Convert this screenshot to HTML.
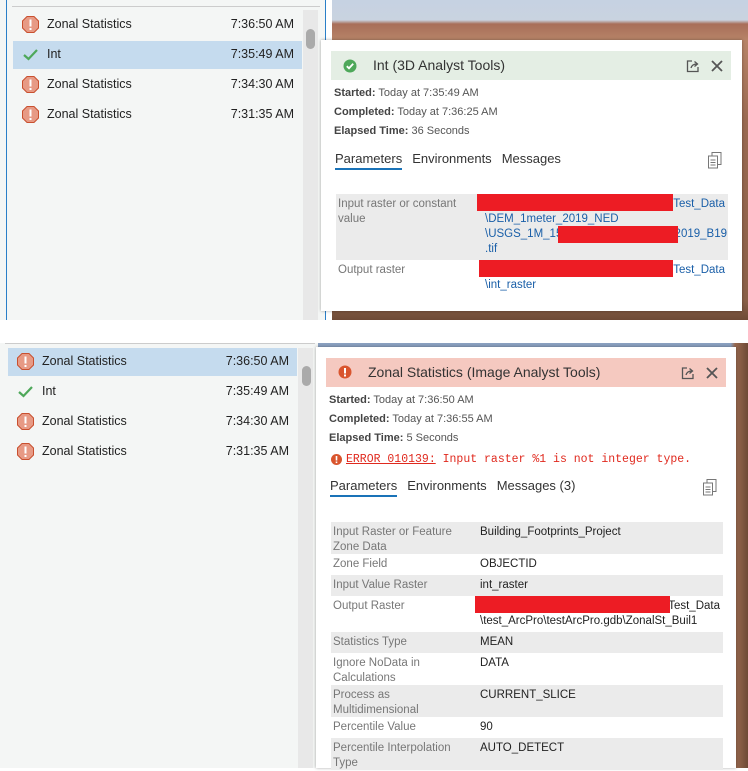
<!DOCTYPE html>
<html><head><style>
*{margin:0;padding:0;box-sizing:border-box}
body{width:748px;height:768px;position:relative;overflow:hidden;background:#fff;font-family:"Liberation Sans",sans-serif;font-size:12px;color:#222}
.abs{position:absolute}
.panel{background:#f4f6f5}
.row{position:absolute;height:29px;line-height:29px;font-size:12.5px;color:#222}
.row .t{position:absolute;right:8px}
.row .n{position:absolute;left:34px}
.ic{position:absolute;left:9px;top:6px;width:17px;height:17px}
.pop{background:#fff;box-shadow:0 0 3px rgba(0,0,0,.35)}
.hdr{position:absolute;height:29px;font-size:14px;line-height:29px;color:#333}
.meta{position:absolute;font-size:11px;color:#555;line-height:19px}
.meta b{color:#444}
.tabs{position:absolute;font-size:13px;color:#333}
.tabs span{margin-right:10px}
.tabs .a{border-bottom:2px solid #1a73b8;padding-bottom:2px}
.tbl{position:absolute;font-size:11.5px;line-height:15px}
.tr{position:relative;padding:3px 0}
.tr.g{background:#ebebeb}
.k{color:#777;width:136px;display:inline-block;vertical-align:top;padding-left:2px}
.v{position:absolute;left:149px;top:3px;color:#222;white-space:nowrap}
.red{background:#ed1c24;position:absolute}
.link{color:#1a5fa8}
</style></head><body>
<!-- TOP -->
<div class="abs" style="left:332px;top:0;width:416px;height:320px;background:linear-gradient(#c6d2e2 0,#c9d3e0 20px,#a86e58 24px,#b78468 40px,#9a6a52 120px,#8a6048 300px,#6e4a36 320px)"></div>
<div class="abs panel" style="left:0;top:0;width:326px;height:320px"></div>
<div class="abs" style="left:6px;top:0;width:1px;height:320px;background:#2a7fc8"></div>
<div class="abs" style="left:325px;top:0;width:1px;height:320px;background:#2a7fc8"></div>
<div class="abs" style="left:12px;top:6px;width:308px;height:1px;background:#ccc"></div>
<div class="abs" style="left:303px;top:10px;width:15px;height:310px;background:#e8e8e8"></div>
<div class="abs" style="left:306px;top:29px;width:9px;height:20px;border-radius:5px;background:#aaa"></div>
<div class="abs" style="left:13px;top:41px;width:289px;height:28px;background:#c5dbee"></div>

<svg width="0" height="0" style="position:absolute"><defs>
<g id="err"><polygon points="5,0.5 12,0.5 16.5,5 16.5,12 12,16.5 5,16.5 0.5,12 0.5,5" fill="#e79a85" stroke="#c9502f" stroke-width="1"/><rect x="7.5" y="3.5" width="2" height="7" fill="#fff"/><rect x="7.5" y="12" width="2" height="2" fill="#fff"/></g>
<g id="ok"><path d="M2 9 L6.5 13 L15 4" stroke="#4ea85a" stroke-width="2.2" fill="none"/></g>
</defs></svg>

<div class="row" style="left:13px;top:10px;width:289px"><svg class="ic"><use href="#err"/></svg><span class="n">Zonal Statistics</span><span class="t">7:36:50 AM</span></div>
<div class="row" style="left:13px;top:40px;width:289px"><svg class="ic"><use href="#ok"/></svg><span class="n">Int</span><span class="t">7:35:49 AM</span></div>
<div class="row" style="left:13px;top:70px;width:289px"><svg class="ic"><use href="#err"/></svg><span class="n">Zonal Statistics</span><span class="t">7:34:30 AM</span></div>
<div class="row" style="left:13px;top:100px;width:289px"><svg class="ic"><use href="#err"/></svg><span class="n">Zonal Statistics</span><span class="t">7:31:35 AM</span></div>

<div class="abs pop" style="left:321px;top:40px;width:421px;height:271px"></div>
<div class="hdr" style="left:331px;top:51px;width:400px;background:#e4eee4">
<svg class="abs" style="left:12px;top:8px" width="14" height="14"><circle cx="7" cy="7" r="6.5" fill="#4ea85a"/><path d="M3.8 7.2 L6 9.3 L10.2 4.8" stroke="#fff" stroke-width="1.8" fill="none"/></svg>
<span class="abs" style="left:42px">Int (3D Analyst Tools)</span>
<svg class="abs" style="left:355px;top:8px" width="14" height="14"><path d="M6 2H1.5V12.5H12V8" stroke="#555" stroke-width="1.3" fill="none"/><path d="M5 9 Q6 5 11 5 M8.5 2.5 L11.5 5 L8.5 7.5" stroke="#555" stroke-width="1.3" fill="none"/></svg>
<svg class="abs" style="left:380px;top:9px" width="12" height="12"><path d="M1 1L11 11M11 1L1 11" stroke="#555" stroke-width="1.8"/></svg>
</div>
<div class="meta" style="left:334px;top:84px"><b>Started:</b> Today at 7:35:49 AM<br><b>Completed:</b> Today at 7:36:25 AM<br><b>Elapsed Time:</b> 36 Seconds</div>
<div class="tabs" style="left:335px;top:151px"><span class="a">Parameters</span><span>Environments</span><span>Messages</span></div>
<svg class="abs" style="left:708px;top:152px" width="14" height="17"><rect x="4" y="0.5" width="9" height="12" fill="#fff" stroke="#777"/><rect x="0.5" y="4" width="9" height="12" fill="#fff" stroke="#777"/><path d="M2.5 8h5M2.5 10.5h5M2.5 13h5" stroke="#777"/></svg>
<div class="tbl" style="left:336px;top:194px;width:392px">
<div class="tr g" style="height:66px"><span class="k">Input raster or constant value</span>
<span class="abs link" style="right:3px;top:3px">Test_Data</span>
<span class="abs link" style="left:149px;top:18px">\DEM_1meter_2019_NED</span>
<span class="abs link" style="left:149px;top:33px">\USGS_1M_15</span>
<span class="abs link" style="right:1px;top:33px">2019_B19</span>
<span class="abs link" style="left:149px;top:48px">.tif</span>
<div class="red" style="left:141px;top:0;width:196px;height:17px"></div><div class="red" style="left:222px;top:32px;width:120px;height:17px"></div></div>
<div class="tr" style="height:36px"><span class="k">Output raster</span>
<span class="abs link" style="right:3px;top:3px">Test_Data</span>
<span class="abs link" style="left:149px;top:18px">\int_raster</span>
<div class="red" style="left:143px;top:0;width:194px;height:17px"></div></div>
</div>

<!-- BOTTOM -->
<div class="abs" style="left:316px;top:343px;width:432px;height:425px;background:linear-gradient(90deg,#8aa0c0 0,#8aa0c0 96%,#9a6a50 97%,#6e4a36 100%)"></div>
<div class="abs panel" style="left:0;top:343px;width:318px;height:425px"></div>
<div class="abs" style="left:5px;top:343px;width:310px;height:1px;background:#ccc"></div>
<div class="abs" style="left:298px;top:348px;width:15px;height:420px;background:#e8e8e8"></div>
<div class="abs" style="left:302px;top:366px;width:9px;height:20px;border-radius:5px;background:#aaa"></div>
<div class="abs" style="left:8px;top:348px;width:289px;height:28px;background:#c5dbee"></div>
<div class="row" style="left:8px;top:347px;width:289px"><svg class="ic"><use href="#err"/></svg><span class="n">Zonal Statistics</span><span class="t">7:36:50 AM</span></div>
<div class="row" style="left:8px;top:377px;width:289px"><svg class="ic"><use href="#ok"/></svg><span class="n">Int</span><span class="t">7:35:49 AM</span></div>
<div class="row" style="left:8px;top:407px;width:289px"><svg class="ic"><use href="#err"/></svg><span class="n">Zonal Statistics</span><span class="t">7:34:30 AM</span></div>
<div class="row" style="left:8px;top:437px;width:289px"><svg class="ic"><use href="#err"/></svg><span class="n">Zonal Statistics</span><span class="t">7:31:35 AM</span></div>

<div class="abs pop" style="left:316px;top:347px;width:420px;height:421px"></div>
<div class="hdr" style="left:326px;top:358px;width:400px;background:#f5c9c0">
<svg class="abs" style="left:12px;top:7px" width="14" height="14"><circle cx="7" cy="7" r="6.5" fill="#d9552e"/><rect x="6" y="3" width="2" height="5.5" fill="#fff"/><rect x="6" y="9.5" width="2" height="2" fill="#fff"/></svg>
<span class="abs" style="left:42px">Zonal Statistics (Image Analyst Tools)</span>
<svg class="abs" style="left:355px;top:8px" width="14" height="14"><path d="M6 2H1.5V12.5H12V8" stroke="#555" stroke-width="1.3" fill="none"/><path d="M5 9 Q6 5 11 5 M8.5 2.5 L11.5 5 L8.5 7.5" stroke="#555" stroke-width="1.3" fill="none"/></svg>
<svg class="abs" style="left:380px;top:9px" width="12" height="12"><path d="M1 1L11 11M11 1L1 11" stroke="#555" stroke-width="1.8"/></svg>
</div>
<div class="meta" style="left:329px;top:391px"><b>Started:</b> Today at 7:36:50 AM<br><b>Completed:</b> Today at 7:36:55 AM<br><b>Elapsed Time:</b> 5 Seconds</div>
<svg class="abs" style="left:331px;top:454px" width="11" height="11"><circle cx="5.5" cy="5.5" r="5.5" fill="#d9552e"/><rect x="4.7" y="2" width="1.6" height="4.5" fill="#fff"/><rect x="4.7" y="7.5" width="1.6" height="1.6" fill="#fff"/></svg>
<div class="abs" style="left:346px;top:453px;font-family:'Liberation Mono',monospace;font-size:11.5px;color:#e0291e"><u>ERROR 010139:</u> Input raster %1 is not integer type.</div>
<div class="tabs" style="left:330px;top:478px"><span class="a">Parameters</span><span>Environments</span><span>Messages (3)</span></div>
<svg class="abs" style="left:703px;top:479px" width="14" height="17"><rect x="4" y="0.5" width="9" height="12" fill="#fff" stroke="#777"/><rect x="0.5" y="4" width="9" height="12" fill="#fff" stroke="#777"/><path d="M2.5 8h5M2.5 10.5h5M2.5 13h5" stroke="#777"/></svg>
<div class="tbl" style="left:331px;top:522px;width:392px">
<div class="tr g" style="height:32px"><span class="k">Input Raster or Feature Zone Data</span><span class="v">Building_Footprints_Project</span></div>
<div class="tr" style="height:21px"><span class="k">Zone Field</span><span class="v">OBJECTID</span></div>
<div class="tr g" style="height:21px"><span class="k">Input Value Raster</span><span class="v">int_raster</span></div>
<div class="tr" style="height:36px"><span class="k">Output Raster</span><span class="abs" style="right:3px;top:3px">Test_Data</span><span class="abs" style="left:149px;top:18px">\test_ArcPro\testArcPro.gdb\ZonalSt_Buil1</span><div class="red" style="left:144px;top:0;width:195px;height:17px"></div></div>
<div class="tr g" style="height:21px"><span class="k">Statistics Type</span><span class="v">MEAN</span></div>
<div class="tr" style="height:32px"><span class="k">Ignore NoData in Calculations</span><span class="v">DATA</span></div>
<div class="tr g" style="height:32px"><span class="k">Process as<br>Multidimensional</span><span class="v">CURRENT_SLICE</span></div>
<div class="tr" style="height:21px"><span class="k">Percentile Value</span><span class="v">90</span></div>
<div class="tr g" style="height:32px"><span class="k">Percentile Interpolation Type</span><span class="v">AUTO_DETECT</span></div>
</div>
</body></html>
